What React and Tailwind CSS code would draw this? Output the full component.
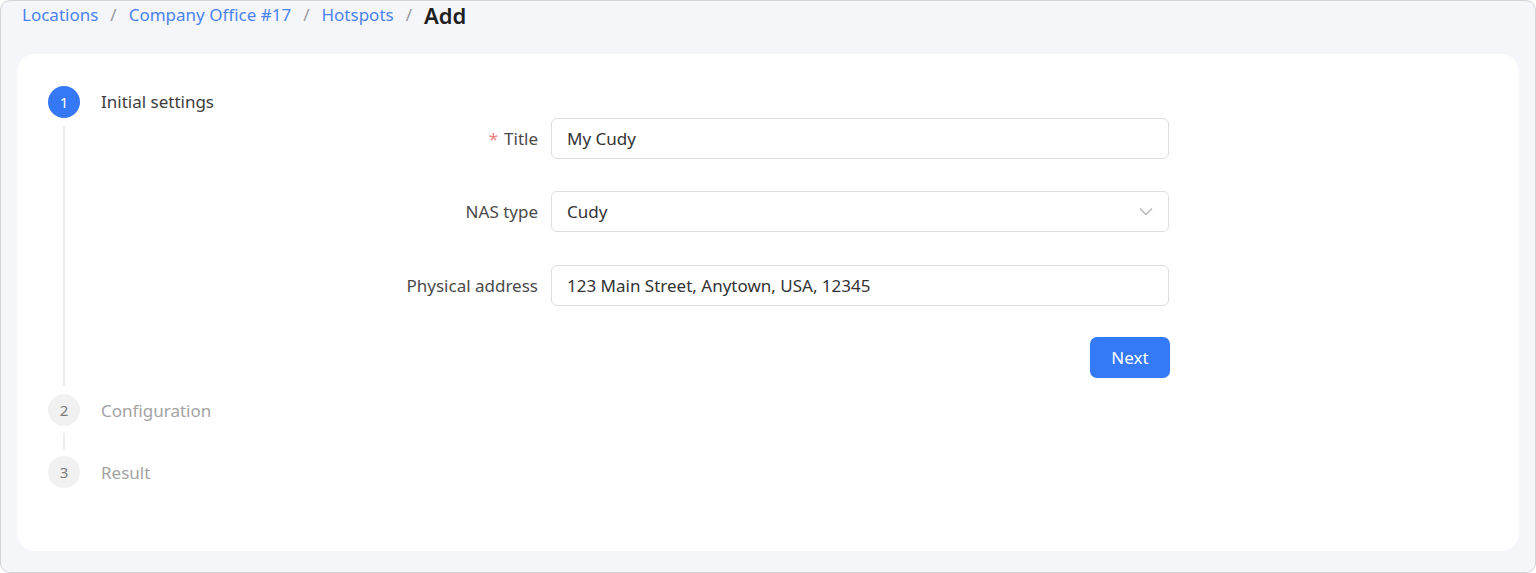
import React from "react";

const font = { fontFamily: '"Noto Sans", "Open Sans", Arial, sans-serif' };

function Field({ label, required, children }) {
  return (
    <div className="flex items-center h-[41px]">
      <div className="w-[450px] pr-[13px] text-right text-[17px] text-[#4a4a4a] shrink-0">
        {required && <span className="text-[#f07a7a] mr-[6px]">*</span>}
        {label}
      </div>
      {children}
    </div>
  );
}

function Input({ value, select }) {
  return (
    <div className="w-[618px] h-[41px] border border-[#dedede] rounded-[6px] bg-white flex items-center px-[15px] text-[17px] text-[#333]">
      <span className="flex-1">{value}</span>
      {select && (
        <svg width="14" height="9" viewBox="0 0 14 9" fill="none">
          <path d="M1 1.5 L7 7.5 L13 1.5" stroke="#b5b5b5" strokeWidth="1.3" />
        </svg>
      )}
    </div>
  );
}

export default function App() {
  return (
    <div
      style={font}
      className="w-[1536px] h-[573px] bg-[#f5f6fa] border border-[#d4d4d8] rounded-[10px] flex flex-col overflow-hidden"
    >
      <div className="h-[53px] pl-[21px] flex items-start">
        <div className="flex items-center h-[28px] text-[17px]">
          <span className="text-[#4a83ee]">Locations</span>
          <span className="mx-[12px] text-[#9a9a9a]">/</span>
          <span className="text-[#4a83ee]">Company Office #17</span>
          <span className="mx-[12px] text-[#9a9a9a]">/</span>
          <span className="text-[#4a83ee]">Hotspots</span>
          <span className="mx-[12px] text-[#9a9a9a]">/</span>
          <span className="text-[22px] font-semibold text-[#1f1f1f]">Add</span>
        </div>
      </div>
      <div className="mx-[16px] h-[497px] bg-white rounded-[18px] pl-[31px] pt-[32px]">
        {/* Step 1 */}
        <div className="flex h-[308px]">
          <div className="w-[32px] flex flex-col items-center shrink-0">
            <div className="w-[32px] h-[32px] rounded-full bg-[#3478f6] text-white text-[15px] flex items-center justify-center">1</div>
            <div className="w-[2px] flex-1 bg-[#ececec] mt-[7px] mb-[7px]"></div>
          </div>
          <div className="ml-[21px] flex flex-col">
            <div className="h-[32px] flex items-center text-[17px] text-[#3d3d3d]">Initial settings</div>
            <div className="flex flex-col">
              <Field label="Title" required>
                <Input value="My Cudy" />
              </Field>
              <div className="h-[32px]"></div>
              <Field label="NAS type">
                <Input value="Cudy" select />
              </Field>
              <div className="h-[33px]"></div>
              <Field label="Physical address">
                <Input value="123 Main Street, Anytown, USA, 12345" />
              </Field>
              <div className="h-[31px]"></div>
              <div className="flex justify-end w-[1069px]">
                <button className="w-[80px] h-[41px] rounded-[7px] bg-[#3479f5] text-white text-[17px]">Next</button>
              </div>
            </div>
          </div>
        </div>
        {/* Step 2 */}
        <div className="flex h-[62px]">
          <div className="w-[32px] flex flex-col items-center shrink-0">
            <div className="w-[32px] h-[32px] rounded-full bg-[#f1f1f1] text-[#7a7a7a] text-[15px] flex items-center justify-center">2</div>
            <div className="w-[2px] flex-1 bg-[#ececec] mt-[7px] mb-[6px]"></div>
          </div>
          <div className="ml-[21px]">
            <div className="h-[32px] flex items-center pt-[2px] text-[17px] text-[#a3a3a3]">Configuration</div>
          </div>
        </div>
        {/* Step 3 */}
        <div className="flex">
          <div className="w-[32px] flex flex-col items-center shrink-0">
            <div className="w-[32px] h-[32px] rounded-full bg-[#f1f1f1] text-[#7a7a7a] text-[15px] flex items-center justify-center">3</div>
          </div>
          <div className="ml-[21px]">
            <div className="h-[32px] flex items-center pt-[2px] text-[17px] text-[#a3a3a3]">Result</div>
          </div>
        </div>
      </div>
    </div>
  );
}
